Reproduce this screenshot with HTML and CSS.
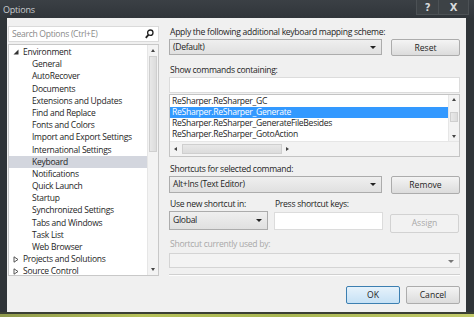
FILE: index.html
```html
<!DOCTYPE html>
<html lang="en">

<head>
    <meta charset="UTF-8">
    <meta name="viewport" content="width=device-width, initial-scale=1.0">
    <title>Options</title>
    <link rel="stylesheet" href="styles.css">
</head>

<body>
    <div class="window">
        <div class="titlebar">
            <span class="title">Options</span>
            <div class="caption">
                <span class="cbtn help">?</span>
                <span class="cbtn close">X</span>
            </div>
        </div>
        <div class="frame">
            <div class="client">
                <div class="panes">
                    <div class="left">
                        <div class="search">
                            <span class="hint">Search Options (Ctrl+E)</span>
                            <svg class="glass" width="9" height="10" viewBox="0 0 9 10">
                                <circle cx="5.3" cy="3.7" r="2.7" fill="none" stroke="#222" stroke-width="1.3"/>
                                <path d="M3.6 5.6 L0.8 8.8" stroke="#222" stroke-width="1.8"/>
                            </svg>
                        </div>
                        <div class="tree">
                            <ul class="nodes">
                                <li class="node root"><svg class="arrow" width="6" height="6" viewBox="0 0 6 6"><path d="M5.5 0.5 L5.5 5.5 L0.5 5.5 Z" fill="#333"/></svg>Environment</li>
                                <li class="node">General</li>
                                <li class="node">AutoRecover</li>
                                <li class="node">Documents</li>
                                <li class="node">Extensions and Updates</li>
                                <li class="node">Find and Replace</li>
                                <li class="node">Fonts and Colors</li>
                                <li class="node">Import and Export Settings</li>
                                <li class="node">International Settings</li>
                                <li class="node selected">Keyboard</li>
                                <li class="node">Notifications</li>
                                <li class="node">Quick Launch</li>
                                <li class="node">Startup</li>
                                <li class="node">Synchronized Settings</li>
                                <li class="node">Tabs and Windows</li>
                                <li class="node">Task List</li>
                                <li class="node">Web Browser</li>
                                <li class="node root"><svg class="arrow" width="6" height="7" viewBox="0 0 6 7"><path d="M1 0.8 L5 3.5 L1 6.2 Z" fill="none" stroke="#444" stroke-width="0.9"/></svg>Projects and Solutions</li>
                                <li class="node root"><svg class="arrow" width="6" height="7" viewBox="0 0 6 7"><path d="M1 0.8 L5 3.5 L1 6.2 Z" fill="none" stroke="#444" stroke-width="0.9"/></svg>Source Control</li>
                            </ul>
                            <div class="vscroll">
                                <span class="sarrow up"></span>
                                <div class="track"><div class="thumb tall"></div></div>
                                <span class="sarrow down"></span>
                            </div>
                        </div>
                    </div>

                    <div class="right">
                        <div class="label">Apply the following additional keyboard mapping scheme:</div>
                        <div class="row">
                            <div class="combo wide">(Default)<span class="caret"></span></div>
                            <button class="btn">Reset</button>
                        </div>

                        <div class="label gap">Show commands containing:</div>
                        <div class="textbox full"></div>

                        <div class="list">
                            <div class="list-body">
                                <ul class="items">
                                    <li class="item">ReSharper.ReSharper_GC</li>
                                    <li class="item selected">ReSharper.ReSharper_Generate</li>
                                    <li class="item">ReSharper.ReSharper_GenerateFileBesides</li>
                                    <li class="item">ReSharper.ReSharper_GotoAction</li>
                                </ul>
                                <div class="vscroll small">
                                    <span class="sarrow up"></span>
                                    <div class="track"><div class="thumb short"></div></div>
                                    <span class="sarrow down"></span>
                                </div>
                            </div>
                            <div class="hscroll">
                                <span class="sarrow left"></span>
                                <div class="htrack"><div class="hthumb"></div></div>
                                <span class="sarrow right"></span>
                            </div>
                        </div>

                        <div class="label gap-sm">Shortcuts for selected command:</div>
                        <div class="row">
                            <div class="combo wide tall">Alt+Ins (Text Editor)<span class="caret"></span></div>
                            <button class="btn tall">Remove</button>
                        </div>

                        <div class="pair">
                            <div class="label scope-label">Use new shortcut in:</div>
                            <div class="label">Press shortcut keys:</div>
                        </div>
                        <div class="row assign-row">
                            <div class="combo scope">Global<span class="caret"></span></div>
                            <div class="textbox keys"></div>
                            <button class="btn assign" disabled>Assign</button>
                        </div>

                        <div class="label muted">Shortcut currently used by:</div>
                        <div class="combo full disabled"><span class="caret"></span></div>
                        <div class="rule"></div>
                    </div>
                </div>

                <div class="footer">
                    <button class="btn default">OK</button>
                    <button class="btn">Cancel</button>
                </div>
            </div>
        </div>
        <div class="desktop"></div>
    </div>
</body>

</html>
```

FILE: styles.css
```css
* {
    margin: 0;
    padding: 0;
    box-sizing: border-box;
}

body {
    width: 474px;
    height: 317px;
    overflow: hidden;
    background-color: #2f3438;
    font-family: "Open Sans", "Noto Sans", sans-serif;
    font-size: 8.6px;
    letter-spacing: -0.3px;
    color: #1e1e1e;
}

ul {
    list-style: none;
}

.window {
    display: flex;
    flex-direction: column;
    height: 317px;
}

/* title bar */

.titlebar {
    display: flex;
    justify-content: space-between;
    height: 18px;
    background: linear-gradient(#3b4045, #30353a);
}

.title {
    padding: 3px 0 0 3px;
    font-size: 9px;
    letter-spacing: -0.2px;
    color: #c9cccf;
}

.caption {
    display: flex;
    margin-right: 5px;
    height: 15px;
}

.cbtn {
    display: flex;
    align-items: center;
    justify-content: center;
    font-family: "DejaVu Sans", sans-serif;
    font-weight: bold;
    font-size: 10px;
    color: #d8dadc;
    background-color: #3d4246;
    border: 1px solid #4c5155;
    border-top: 0;
}

.help {
    width: 23px;
}

.close {
    width: 30px;
    border-left: 0;
}

/* frame + client area */

.frame {
    display: flex;
    padding: 0 8px 0 7px;
    height: 294px;
}

.client {
    flex: 1;
    display: flex;
    flex-direction: column;
    background-color: #f0f0f0;
    padding: 8px 6px 0 1px;
}

.desktop {
    flex: 1;
    border-top: 2px solid #3a3f33;
    background: linear-gradient(90deg, #8f9a4c, #b7c25a 30%, #a9b753 60%, #c3cb6b);
}

.panes {
    display: flex;
    gap: 10px;
    height: 250px;
}

/* left pane */

.left {
    display: flex;
    flex-direction: column;
    width: 151px;
}

.search {
    display: flex;
    align-items: center;
    justify-content: space-between;
    height: 16px;
    padding: 0 4px 0 3px;
    background-color: #fff;
    border: 1px solid #dadada;
}

.hint {
    color: #8a8a8a;
}

.tree {
    display: flex;
    margin-top: 2px;
    height: 232px;
    background-color: #fff;
    border: 1px solid #c8c8c8;
    overflow: hidden;
}

.nodes {
    flex: 1;
    padding-top: 1px;
    font-size: 8.5px;
    letter-spacing: -0.25px;
}

.node {
    height: 12.2px;
    line-height: 12.2px;
    padding-left: 23px;
    white-space: nowrap;
}

.node.root {
    display: flex;
    align-items: center;
    padding-left: 4px;
}

.arrow {
    margin-right: 4px;
}

.node.selected {
    background-color: #d3d6de;
}

/* scrollbars */

.vscroll {
    display: flex;
    flex-direction: column;
    align-items: center;
    width: 11px;
    background-color: #f3f3f3;
    border-left: 1px solid #e6e6e6;
}

.track {
    flex: 1;
    width: 100%;
    padding: 0 1px;
}

.thumb {
    width: 100%;
    background: linear-gradient(90deg, #e8e8e8, #dcdcdc);
    border: 1px solid #cfcfcf;
}

.thumb.tall {
    height: 96px;
}

.thumb.short {
    margin-top: 8px;
    height: 10px;
}

.sarrow {
    display: block;
    width: 0;
    height: 0;
    margin: 4px 0;
    border: 2.5px solid transparent;
}

.sarrow.up {
    border-bottom: 3px solid #444;
    border-top: 0;
}

.sarrow.down {
    border-top: 3px solid #444;
    border-bottom: 0;
}

.sarrow.left {
    margin: 0 4px;
    border-right: 3px solid #444;
    border-left: 0;
}

.sarrow.right {
    margin: 0 4px;
    border-left: 3px solid #444;
    border-right: 0;
}

/* right pane */

.right {
    display: flex;
    flex-direction: column;
    width: 291px;
}

.label {
    height: 12px;
    line-height: 12px;
    padding-left: 1px;
    white-space: nowrap;
}

.label.gap {
    margin-top: 8px;
}

.label.gap-sm {
    margin-top: 6px;
}

.label.muted {
    margin-top: 5px;
    color: #a8a8a8;
}

.row {
    display: flex;
    justify-content: space-between;
    align-items: flex-start;
    margin-top: 1px;
}

.combo {
    position: relative;
    display: flex;
    align-items: center;
    height: 16px;
    padding-left: 3px;
    background: linear-gradient(#efefef, #e0e0e0);
    border: 1px solid #acacac;
}

.combo.wide {
    width: 213px;
}

.combo.tall {
    height: 17px;
}

.combo.full {
    width: 291px;
}

.caret {
    position: absolute;
    right: 5px;
    top: 6px;
    border: 3px solid transparent;
    border-top: 3px solid #222;
    border-bottom: 0;
}

.combo.disabled {
    margin-top: 3px;
    height: 16px;
    background: #f3f3f3;
    border-color: #d4d4d4;
}

.combo.disabled .caret {
    border-top-color: #777;
}

.btn {
    width: 69px;
    height: 17px;
    font: inherit;
    color: #1e1e1e;
    background: linear-gradient(#f4f4f4, #dcdcdc);
    border: 1px solid #acacac;
    border-radius: 2px;
}

.btn.tall {
    height: 18px;
}

.textbox {
    height: 17px;
    background-color: #fff;
    border: 1px solid #dcdcdc;
}

.textbox.full {
    margin-top: 1px;
    width: 291px;
}

.list {
    display: flex;
    flex-direction: column;
    margin-top: 1px;
    height: 64px;
    background-color: #fff;
    border: 1px solid #c4c4c4;
}

.list-body {
    display: flex;
    height: 46px;
}

.items {
    flex: 1;
    padding-top: 1px;
}

.item {
    height: 11px;
    line-height: 11px;
    padding-left: 2px;
    white-space: nowrap;
}

.item.selected {
    color: #fff;
    background-color: #3399ff;
}

.vscroll.small .sarrow {
    margin: 3px 0;
}

.hscroll {
    display: flex;
    align-items: center;
    height: 15px;
    background-color: #f3f3f3;
    border-top: 1px solid #e6e6e6;
}

.htrack {
    flex: 1;
    padding: 1px 0;
}

.hthumb {
    width: 100px;
    height: 10px;
    margin-left: 1px;
    background: linear-gradient(#e8e8e8, #dcdcdc);
    border: 1px solid #cfcfcf;
}

.pair {
    display: flex;
    margin-top: 4px;
}

.scope-label {
    width: 105px;
}

.assign-row {
    justify-content: flex-start;
}

.combo.scope {
    width: 99px;
    height: 19px;
}

.combo.scope .caret {
    top: 7px;
}

.textbox.keys {
    margin: 1px 0 0 6px;
    width: 109px;
    height: 18px;
}

.btn.assign {
    margin: 3px 0 0 7px;
    height: 19px;
    color: #a8a8a8;
    background: #f2f2f2;
    border-color: #d2d2d2;
}

.rule {
    margin-top: 6px;
    height: 2px;
    border-top: 1px solid #d0d0d0;
    border-bottom: 1px solid #fdfdfd;
}

/* footer */

.footer {
    display: flex;
    justify-content: flex-end;
    gap: 6px;
    padding: 10px 0 0;
}

.footer .btn {
    width: 54px;
    height: 18px;
}

.btn.default {
    background: linear-gradient(#e6f2fb, #c6e1f5);
    border-color: #3c7fb1;
}
```
